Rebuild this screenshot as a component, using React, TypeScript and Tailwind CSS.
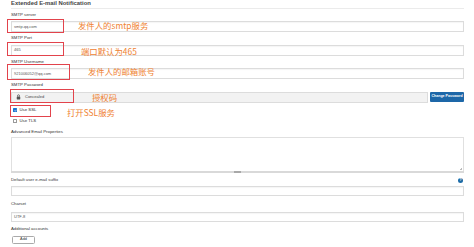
import React from "react";

const sans = "font-['Liberation_Sans','Open_Sans','Noto_Sans_CJK_SC',sans-serif]";
const cjk = "font-['Noto_Sans_CJK_SC','Noto_Sans',sans-serif]";

function Label({ text, className = "" }: { text: string; className?: string }) {
  return (
    <div className={`h-[8px] flex items-center text-[4.3px] text-[#333] ${className}`}>{text}</div>
  );
}

function TextInput({ value = "", h = "h-[11px]", className = "" }: { value?: string; h?: string; className?: string }) {
  return (
    <div
      className={`${h} border border-[#dcdcdc] bg-white flex items-center pl-[2px] text-[4px] text-[#555] shadow-[inset_0_1px_1px_rgba(0,0,0,0.04)] ${className}`}
    >
      {value}
    </div>
  );
}

function Note({ text, x, y, w, h }: { text: string; x: number; y: number; w: number; h: number }) {
  return (
    <div
      className="absolute border-[1.3px] border-[#e2434c]"
      style={{ left: x, top: y, width: w, height: h }}
      aria-label={text}
    />
  );
}

export default function App() {
  return (
    <div className={`relative w-[474px] h-[247px] overflow-hidden bg-white ${sans}`}>
      <div className="pl-[11px] pr-[10px]">
        {/* section header */}
        <div className="h-[9px] border-b border-[#ebebeb] flex items-center text-[5.9px] font-semibold text-[#444] leading-none">
          Extended E-mail Notification
        </div>

        <div className="pt-[2px] flex flex-col">
          <Label text="SMTP server" />
          <TextInput value="smtp.qq.com" className="mt-[2px]" />

          <Label text="SMTP Port" className="mt-[2.5px]" />
          <TextInput value="465" className="mt-[2px]" />

          <Label text="SMTP Username" className="mt-[2.5px]" />
          <TextInput value="921006052@qq.com" className="mt-[2px]" />

          <Label text="SMTP Password" className="mt-[2.5px]" />
          <div className="mt-[2px] h-[11px] flex gap-[2px]">
            <div className="flex-1 border border-[#dcdcdc] bg-[#f2f2f2] flex items-center pl-[4px] gap-[4px] text-[4px] text-[#444]">
              <svg width="5" height="6" viewBox="0 0 10 12">
                <path d="M3 5V3.5a2 2 0 0 1 4 0V5" fill="none" stroke="#555" strokeWidth="1.6" />
                <rect x="1.5" y="5" width="7" height="6" rx="0.8" fill="#555" />
              </svg>
              Concealed
            </div>
            <div className="w-[34px] my-[0.5px] bg-[#1d67a8] rounded-[1px] flex items-center justify-center text-[3.6px] font-bold text-white whitespace-nowrap">
              Change Password
            </div>
          </div>

          <div className="mt-[3.5px] h-[8px] flex items-center gap-[2.5px] pl-[2px] text-[4.3px] text-[#333]">
            <div className="w-[4px] h-[4px] bg-[#1a73d0] rounded-[0.5px] flex items-center justify-center">
              <svg width="3" height="3" viewBox="0 0 6 6">
                <path d="M1 3l1.5 1.5L5 1.5" fill="none" stroke="white" strokeWidth="1.2" />
              </svg>
            </div>
            Use SSL
          </div>
          <div className="mt-[3px] h-[8px] flex items-center gap-[2.5px] pl-[2px] text-[4.3px] text-[#333]">
            <div className="w-[4px] h-[4px] border border-[#999] bg-white rounded-[0.5px]" />
            Use TLS
          </div>

          <Label text="Advanced Email Properties" className="mt-[3px]" />
          <div className="mt-[1px] h-[34px] border border-[#e0e0e0] border-b-0 bg-white relative">
            <div className="absolute right-[1px] bottom-[1px] w-[2px] h-[2px] border-r border-b border-[#bbb]" />
          </div>
          <div className="h-[2px] bg-[#d9d9d9] flex justify-center">
            <div className="w-[7px] h-[2px] bg-[#a8a8a8]" />
          </div>

          <div className="mt-[3px] h-[8px] flex items-center justify-between text-[4.3px] text-[#333]">
            <span>Default user e-mail suffix</span>
            <span className="w-[5px] h-[5px] rounded-full bg-[#1b6aa5] text-white text-[4px] font-bold leading-none flex items-center justify-center mr-[1px]">
              ?
            </span>
          </div>
          <TextInput h="h-[10px]" className="mt-[1.5px]" />

          <Label text="Charset" className="mt-[5px]" />
          <TextInput value="UTF-8" h="h-[10px]" className="mt-[3px]" />

          <Label text="Additional accounts" className="mt-[4px]" />
          <div className="mt-[2px] ml-[1px] w-[23px] h-[8px] border border-[#aaa] rounded-[1.5px] bg-white flex items-center justify-center text-[3.8px] text-[#333]">
            Add
          </div>
        </div>
      </div>

      {/* annotation boxes */}
      <Note text="smtp server" x={7} y={19} w={57} h={14} />
      <Note text="smtp port" x={7} y={42} w={57} h={14} />
      <Note text="username" x={7} y={64} w={63} h={16} />
      <Note text="password" x={10} y={89} w={64} h={14} />
      <Note text="ssl" x={10} y={105} w={41} h={12} />

      {/* annotation text */}
      <div className={`absolute left-[78px] top-[19px] text-[8.4px] leading-[12px] text-[#ef8232] ${cjk}`}>发件人的smtp服务</div>
      <div className={`absolute left-[81px] top-[45px] text-[8.4px] leading-[12px] text-[#ef8232] ${cjk}`}>端口默认为465</div>
      <div className={`absolute left-[88px] top-[65px] text-[8.4px] leading-[12px] text-[#ef8232] ${cjk}`}>发件人的邮箱账号</div>
      <div className={`absolute left-[92px] top-[91px] text-[8.4px] leading-[12px] text-[#ef8232] ${cjk}`}>授权码</div>
      <div className={`absolute left-[67px] top-[106px] text-[8.4px] leading-[12px] text-[#ef8232] ${cjk}`}>打开SSL服务</div>
    </div>
  );
}
